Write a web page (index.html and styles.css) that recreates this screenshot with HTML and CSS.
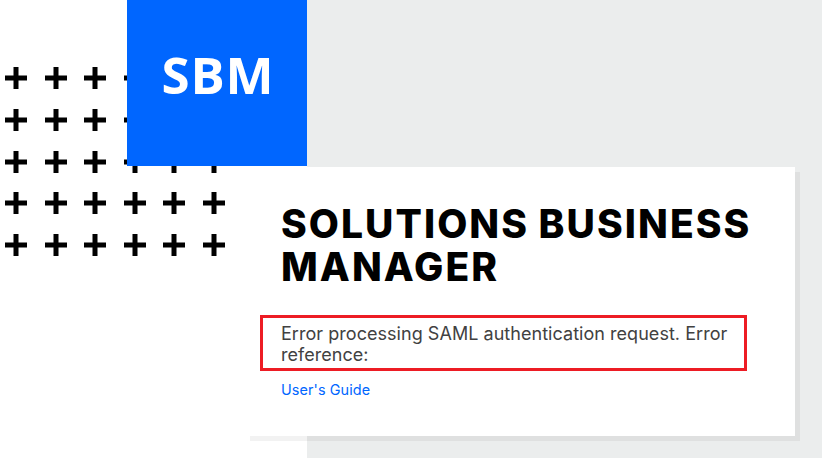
FILE: index.html
```html
<!DOCTYPE html>
<html lang="en">
<head>
<meta charset="utf-8">
<title>Solutions Business Manager</title>
<link rel="stylesheet" href="styles.css">
</head>
<body>
<div class="page">
  <div class="plus-grid" aria-hidden="true">
    <svg class="plus" viewBox="0 0 22 22"><path d="M8.5 0h5v8.5H22v5h-8.5V22h-5v-8.5H0v-5h8.5z"/></svg>
    <svg class="plus" viewBox="0 0 22 22"><path d="M8.5 0h5v8.5H22v5h-8.5V22h-5v-8.5H0v-5h8.5z"/></svg>
    <svg class="plus" viewBox="0 0 22 22"><path d="M8.5 0h5v8.5H22v5h-8.5V22h-5v-8.5H0v-5h8.5z"/></svg>
    <svg class="plus" viewBox="0 0 22 22"><path d="M8.5 0h5v8.5H22v5h-8.5V22h-5v-8.5H0v-5h8.5z"/></svg>
    <svg class="plus" viewBox="0 0 22 22"><path d="M8.5 0h5v8.5H22v5h-8.5V22h-5v-8.5H0v-5h8.5z"/></svg>
    <svg class="plus" viewBox="0 0 22 22"><path d="M8.5 0h5v8.5H22v5h-8.5V22h-5v-8.5H0v-5h8.5z"/></svg>
    <svg class="plus" viewBox="0 0 22 22"><path d="M8.5 0h5v8.5H22v5h-8.5V22h-5v-8.5H0v-5h8.5z"/></svg>
    <svg class="plus" viewBox="0 0 22 22"><path d="M8.5 0h5v8.5H22v5h-8.5V22h-5v-8.5H0v-5h8.5z"/></svg>
    <svg class="plus" viewBox="0 0 22 22"><path d="M8.5 0h5v8.5H22v5h-8.5V22h-5v-8.5H0v-5h8.5z"/></svg>
    <svg class="plus" viewBox="0 0 22 22"><path d="M8.5 0h5v8.5H22v5h-8.5V22h-5v-8.5H0v-5h8.5z"/></svg>
    <svg class="plus" viewBox="0 0 22 22"><path d="M8.5 0h5v8.5H22v5h-8.5V22h-5v-8.5H0v-5h8.5z"/></svg>
    <svg class="plus" viewBox="0 0 22 22"><path d="M8.5 0h5v8.5H22v5h-8.5V22h-5v-8.5H0v-5h8.5z"/></svg>
    <svg class="plus" viewBox="0 0 22 22"><path d="M8.5 0h5v8.5H22v5h-8.5V22h-5v-8.5H0v-5h8.5z"/></svg>
    <svg class="plus" viewBox="0 0 22 22"><path d="M8.5 0h5v8.5H22v5h-8.5V22h-5v-8.5H0v-5h8.5z"/></svg>
    <svg class="plus" viewBox="0 0 22 22"><path d="M8.5 0h5v8.5H22v5h-8.5V22h-5v-8.5H0v-5h8.5z"/></svg>
    <svg class="plus" viewBox="0 0 22 22"><path d="M8.5 0h5v8.5H22v5h-8.5V22h-5v-8.5H0v-5h8.5z"/></svg>
    <svg class="plus" viewBox="0 0 22 22"><path d="M8.5 0h5v8.5H22v5h-8.5V22h-5v-8.5H0v-5h8.5z"/></svg>
    <svg class="plus" viewBox="0 0 22 22"><path d="M8.5 0h5v8.5H22v5h-8.5V22h-5v-8.5H0v-5h8.5z"/></svg>
    <svg class="plus" viewBox="0 0 22 22"><path d="M8.5 0h5v8.5H22v5h-8.5V22h-5v-8.5H0v-5h8.5z"/></svg>
    <svg class="plus" viewBox="0 0 22 22"><path d="M8.5 0h5v8.5H22v5h-8.5V22h-5v-8.5H0v-5h8.5z"/></svg>
    <svg class="plus" viewBox="0 0 22 22"><path d="M8.5 0h5v8.5H22v5h-8.5V22h-5v-8.5H0v-5h8.5z"/></svg>
    <svg class="plus" viewBox="0 0 22 22"><path d="M8.5 0h5v8.5H22v5h-8.5V22h-5v-8.5H0v-5h8.5z"/></svg>
    <svg class="plus" viewBox="0 0 22 22"><path d="M8.5 0h5v8.5H22v5h-8.5V22h-5v-8.5H0v-5h8.5z"/></svg>
    <svg class="plus" viewBox="0 0 22 22"><path d="M8.5 0h5v8.5H22v5h-8.5V22h-5v-8.5H0v-5h8.5z"/></svg>
    <svg class="plus" viewBox="0 0 22 22"><path d="M8.5 0h5v8.5H22v5h-8.5V22h-5v-8.5H0v-5h8.5z"/></svg>
    <svg class="plus" viewBox="0 0 22 22"><path d="M8.5 0h5v8.5H22v5h-8.5V22h-5v-8.5H0v-5h8.5z"/></svg>
    <svg class="plus" viewBox="0 0 22 22"><path d="M8.5 0h5v8.5H22v5h-8.5V22h-5v-8.5H0v-5h8.5z"/></svg>
    <svg class="plus" viewBox="0 0 22 22"><path d="M8.5 0h5v8.5H22v5h-8.5V22h-5v-8.5H0v-5h8.5z"/></svg>
    <svg class="plus" viewBox="0 0 22 22"><path d="M8.5 0h5v8.5H22v5h-8.5V22h-5v-8.5H0v-5h8.5z"/></svg>
    <svg class="plus" viewBox="0 0 22 22"><path d="M8.5 0h5v8.5H22v5h-8.5V22h-5v-8.5H0v-5h8.5z"/></svg>
  </div>
  <div class="logo">SBM</div>
  <main class="card">
    <h1 class="title">SOLUTIONS BUSINESS MANAGER</h1>
    <p class="error">Error processing SAML authentication request. Error reference:</p>
    <a class="guide" href="#">User's Guide</a>
  </main>
</div>
</body>
</html>
```

FILE: styles.css
```css
* { box-sizing: border-box; }
html, body { margin: 0; padding: 0; }
body { background: #fff; overflow: hidden; }

.page {
  position: relative;
  width: 822px;
  height: 458px;
  background: linear-gradient(to right, #fff 307px, #ebeded 307px);
  font-family: Inter, "Liberation Sans", sans-serif;
}

.plus-grid {
  position: absolute;
  left: 5px;
  top: 67px;
  display: grid;
  grid-template-columns: repeat(6, 22px);
  grid-auto-rows: 22px;
  column-gap: 17.6px;
  row-gap: 19.75px;
}
.plus { display: block; width: 22px; height: 22px; fill: #000; }

.logo {
  position: absolute;
  left: 127px;
  top: 0;
  width: 180px;
  height: 166px;
  padding: 0 0 17px 2px;
  display: flex;
  align-items: center;
  justify-content: center;
  background: #0066ff;
  color: #fff;
  font-family: "Open Sans", sans-serif;
  font-weight: 700;
  font-size: 51px;
  letter-spacing: 0.9px;
  line-height: 1;
}

.card {
  position: absolute;
  left: 245px;
  top: 167px;
  width: 550px;
  height: 269px;
  padding: 35px 36px 0;
  background: #fff;
  box-shadow: 5px 5px 0 rgba(0, 0, 0, 0.05);
}

.title {
  margin: 0;
  color: #000;
  font-size: 39px;
  font-weight: 770;
  line-height: 43px;
  letter-spacing: 2.05px;
  word-spacing: -1px;
}

.error {
  margin: 27px 0 0 -21px;
  width: 487px;
  height: 56px;
  padding: 5px 0 0 18px;
  border: 3px solid #ed1c24;
  color: #414141;
  font-size: 18px;
  letter-spacing: 0.04px;
  line-height: 21px;
}

.guide {
  display: block;
  margin-top: 9px;
  color: #0066ff;
  font-size: 14.4px;
  letter-spacing: 0.1px;
  line-height: 20px;
  text-decoration: none;
}
```
